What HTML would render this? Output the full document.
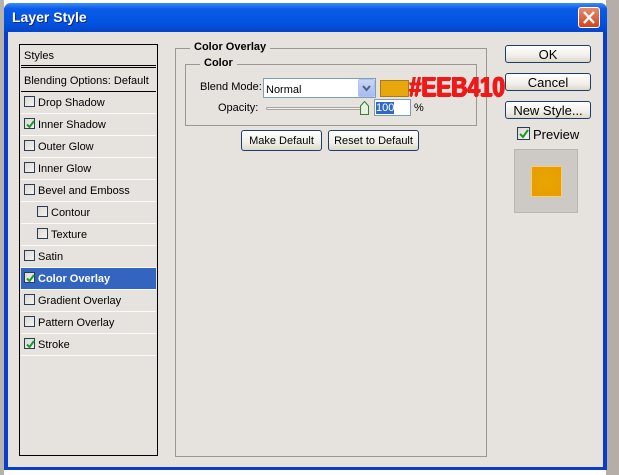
<!DOCTYPE html>
<html><head><meta charset="utf-8">
<style>
*{margin:0;padding:0;box-sizing:border-box}
body{width:619px;height:475px;background:#fff;position:relative;overflow:hidden;font-family:"Liberation Sans",Tahoma,sans-serif;font-size:11px;color:#000}
.abs{position:absolute}
#shade{left:606px;top:0;width:13px;height:475px;background:#b5aea8}
#lshade{left:0;top:0;width:4px;height:475px;background:#b8b2ac}
#win{left:4px;top:3px;width:603px;height:467px;background:#0b3ec8;border-radius:7px 7px 0 0}
#title{left:4px;top:3px;width:603px;height:29px;border-radius:7px 7px 0 0;background:linear-gradient(#3d8cf6,#0a5ce8 20%,#0352e0 70%,#0646c8)}
#title span{position:absolute;left:8px;top:6px;color:#fff;font-weight:bold;font-size:14px;text-shadow:1px 1px 0 #0a2a80}
#close{left:578px;top:7px;width:22px;height:21px;border:1px solid #fff;border-radius:3px;background:linear-gradient(#e88a6a,#d0451f)}
#body{left:8px;top:32px;width:595px;height:435px;background:#e6e2de}
#list{left:19px;top:44px;width:139px;height:412px;border:1px solid #000;background:#e6e2de}
.row{position:absolute;left:1px;width:135px;height:22px;border-bottom:1px solid #fafafa;line-height:23px;padding-left:3px}
.cb{display:inline-block;width:11px;height:11px;border:1px solid #2b3a55;background:linear-gradient(135deg,#dcd9d2,#f4f3ef);vertical-align:-1px;margin-right:3px;position:relative}
.cb svg{position:absolute;left:1px;top:1px}
.sel{background:#3264c0;color:#fff;font-weight:bold}
fieldset{position:absolute;border:1px solid #9c9890;border-radius:0}
.leg{position:absolute;background:#e6e2de;font-weight:bold;padding:0 4px}
.btn{position:absolute;border:1px solid #1f3c6a;border-radius:3px;background:linear-gradient(#fff,#f0efe9 60%,#dcd8cc);text-align:center;font-size:11px}
.bigbtn{font-size:13px;line-height:17px}
</style></head><body>
<div id="lshade" class="abs"></div>
<div id="shade" class="abs"></div>
<div id="win" class="abs"></div>
<div id="title" class="abs"><span>Layer Style</span></div>
<div id="close" class="abs"><svg width="20" height="19"><path d="M5 4L15 15M15 4L5 15" stroke="#fff" stroke-width="2.4"/></svg></div>
<div id="body" class="abs"></div>

<div id="list" class="abs">
 <div class="row" style="top:0;height:23px;border-bottom:3px double #000;line-height:22px">Styles</div>
 <div class="row" style="top:25px;border-bottom:1px solid #000">Blending Options: Default</div>
 <div class="row" style="top:47px"><span class="cb"></span>Drop Shadow</div>
 <div class="row" style="top:69px"><span class="cb"><svg width="9" height="9"><path d="M1 4.5L3.5 7L8 1" stroke="#1a9a2a" stroke-width="2" fill="none"/></svg></span>Inner Shadow</div>
 <div class="row" style="top:91px"><span class="cb"></span>Outer Glow</div>
 <div class="row" style="top:113px"><span class="cb"></span>Inner Glow</div>
 <div class="row" style="top:135px"><span class="cb"></span>Bevel and Emboss</div>
 <div class="row" style="top:157px;padding-left:16px"><span class="cb"></span>Contour</div>
 <div class="row" style="top:179px;padding-left:16px"><span class="cb"></span>Texture</div>
 <div class="row" style="top:201px"><span class="cb"></span>Satin</div>
 <div class="row sel" style="top:223px"><span class="cb"><svg width="9" height="9"><path d="M1 4.5L3.5 7L8 1" stroke="#1a9a2a" stroke-width="2" fill="none"/></svg></span>Color Overlay</div>
 <div class="row" style="top:245px"><span class="cb"></span>Gradient Overlay</div>
 <div class="row" style="top:267px"><span class="cb"></span>Pattern Overlay</div>
 <div class="row" style="top:289px"><span class="cb"><svg width="9" height="9"><path d="M1 4.5L3.5 7L8 1" stroke="#1a9a2a" stroke-width="2" fill="none"/></svg></span>Stroke</div>
</div>

<fieldset style="left:175px;top:48px;width:312px;height:409px"></fieldset>
<div class="leg" style="left:190px;top:41px">Color Overlay</div>
<fieldset style="left:185px;top:64px;width:292px;height:62px"></fieldset>
<div class="leg" style="left:200px;top:57px">Color</div>

<div class="abs" style="left:200px;top:81px">Blend Mode:</div>
<div class="abs" style="left:263px;top:78px;width:113px;height:20px;border:1px solid #7f9db9;background:#fff;padding:5px 2px">Normal</div>
<div class="abs" style="left:358px;top:79px;width:17px;height:18px;border:1px solid #b0c4ec;border-radius:2px;background:linear-gradient(#c8d6f6,#a6bbf0)"><svg width="15" height="16"><path d="M4 6L7.5 10L11 6" stroke="#4d6185" stroke-width="2" fill="none"/></svg></div>
<div class="abs" style="left:380px;top:80px;width:29px;height:17px;background:#e8a70c;border:1px solid #aa7c10"></div>
<div class="abs" style="left:409px;top:71px;color:#ee1a1a;font-weight:bold;font-size:28px;font-family:'Liberation Sans Narrow','Liberation Sans',sans-serif;transform:scaleX(0.8);transform-origin:left;text-shadow:1px 0 0 #ee1a1a,-1px 0 0 #ee1a1a,0 1px 0 #ee1a1a">#EEB410</div>

<div class="abs" style="left:218px;top:102px">Opacity:</div>
<div class="abs" style="left:266px;top:107px;width:99px;height:3px;border:1px solid #a8a49c;border-radius:2px;background:#f4f2ee"></div>
<div class="abs" style="left:360px;top:101px;width:9px;height:14px"><svg width="9" height="14"><path d="M0.5 13.5V5L4.5 0.5L8.5 5V13.5Z" fill="#e4f2de" stroke="#3a7a3a"/></svg></div>
<div class="abs" style="left:374px;top:99px;width:37px;height:17px;border:1px solid #7f9db9;background:#fff;padding:2px 1px"><span style="background:#316ac5;color:#fff">100</span></div>
<div class="abs" style="left:414px;top:102px">%</div>

<div class="btn" style="left:241px;top:130px;width:81px;height:21px;line-height:20px">Make Default</div>
<div class="btn" style="left:328px;top:130px;width:91px;height:21px;line-height:20px">Reset to Default</div>

<div class="btn bigbtn" style="left:505px;top:45px;width:86px;height:18px">OK</div>
<div class="btn bigbtn" style="left:505px;top:73px;width:86px;height:18px">Cancel</div>
<div class="btn bigbtn" style="left:505px;top:101px;width:86px;height:18px">New Style...</div>
<div class="abs" style="left:517px;top:127px;font-size:13px"><span class="cb" style="width:13px;height:13px"><svg width="10" height="10"><path d="M1 5L4 8L9 1" stroke="#1a9a2a" stroke-width="2" fill="none"/></svg></span>Preview</div>
<div class="abs" style="left:514px;top:149px;width:64px;height:64px;background:#cdc9c5;border:1px solid #bab6b2"></div>
<div class="abs" style="left:531px;top:166px;width:31px;height:31px;background:radial-gradient(#e8a700,#e99b00);border:1px solid #f5d070"></div>
</body></html>
